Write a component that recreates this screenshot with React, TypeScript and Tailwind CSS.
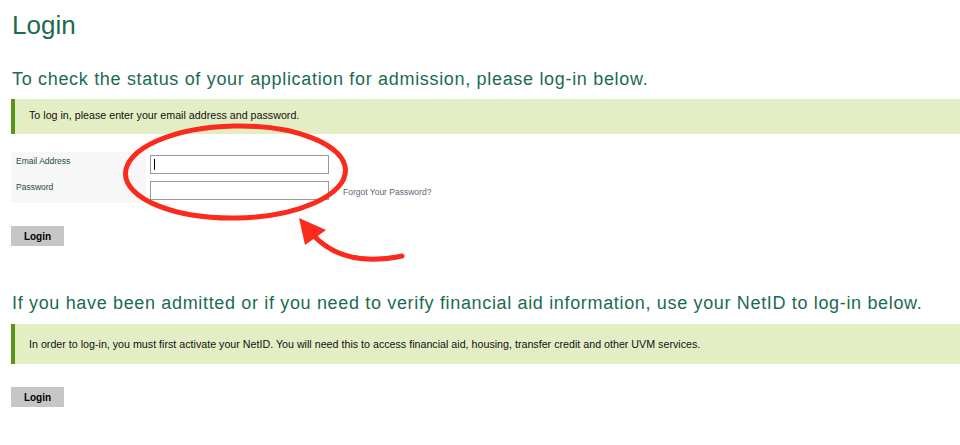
import React from "react";

const font = { fontFamily: '"Liberation Sans", Arial, Helvetica, sans-serif' };

function Notice({ children, h }: { children: React.ReactNode; h: string }) {
  return (
    <div className={`ml-[11px] flex items-center border-l-[4px] border-[#5a9418] bg-[#e4eec4] pl-[14px] text-[10.7px] text-[#111] ${h}`}>
      {children}
    </div>
  );
}

function LoginButton({ extra }: { extra: string }) {
  return (
    <button className={`ml-[11px] flex h-[20px] w-[53px] items-center justify-center bg-[#c6c6c6] text-[10px] font-bold text-black ${extra}`}>
      Login
    </button>
  );
}

export default function App() {
  return (
    <div className="relative h-[445px] w-[960px] overflow-hidden bg-white" style={font}>
      <h1 className="ml-[12px] mt-[10px] text-[26px] leading-[30px] text-[#1b6b50]">Login</h1>
      <h2 className="ml-[12px] mt-[28px] text-[18px] leading-[22px] tracking-[0.68px] text-[#1b6b50]">
        To check the status of your application for admission, please log-in below.
      </h2>
      <div className="mt-[9px]">
        <Notice h="h-[35px] pb-[2px]">To log in, please enter your email address and password.</Notice>
      </div>
      <div className="ml-[11px] mt-[18px] flex items-start">
        <div className="flex h-[51px] w-[135px] flex-col bg-[#f7f7f7] pl-[5px] pt-[1px] text-[8.5px] text-[#1f4b47]">
          <div className="mt-[2px] leading-[12px]">Email Address</div>
          <div className="mt-[14px] leading-[12px]">Password</div>
        </div>
        <div className="ml-[4px] flex flex-col pt-[3px]">
          <div className="relative h-[19px] w-[179px] border border-[#999] bg-white">
            <span className="absolute left-[3px] top-[3px] h-[11px] w-[1px] bg-black" />
          </div>
          <div className="mt-[7px] h-[19px] w-[179px] border border-[#999] bg-white" />
        </div>
        <div className="ml-[14px] mt-[34px] text-[8.5px] leading-[12px] text-[#5b6878]">Forgot Your Password?</div>
      </div>
      <LoginButton extra="mt-[23px]" />
      <h2 className="ml-[12px] mt-[46px] text-[18px] leading-[22px] tracking-[0.66px] text-[#1b6b50]">
        If you have been admitted or if you need to verify financial aid information, use your NetID to log-in below.
      </h2>
      <div className="mt-[10px]">
        <Notice h="h-[40px]">
          In order to log-in, you must first activate your NetID. You will need this to access financial aid, housing, transfer credit and other UVM services.
        </Notice>
      </div>
      <LoginButton extra="mt-[23px]" />

      <svg className="pointer-events-none absolute left-0 top-0" width="960" height="445" viewBox="0 0 960 445">
        <ellipse cx="235.5" cy="172" rx="110" ry="46" fill="none" stroke="#fb2a1c" strokeWidth="5" transform="rotate(-1 235.5 172)" />
        <path d="M314 236 Q345 268 402 256" fill="none" stroke="#fb2a1c" strokeWidth="5" strokeLinecap="round" />
        <polygon points="299,218 305,245 326,230" fill="#fb2a1c" />
      </svg>
    </div>
  );
}
